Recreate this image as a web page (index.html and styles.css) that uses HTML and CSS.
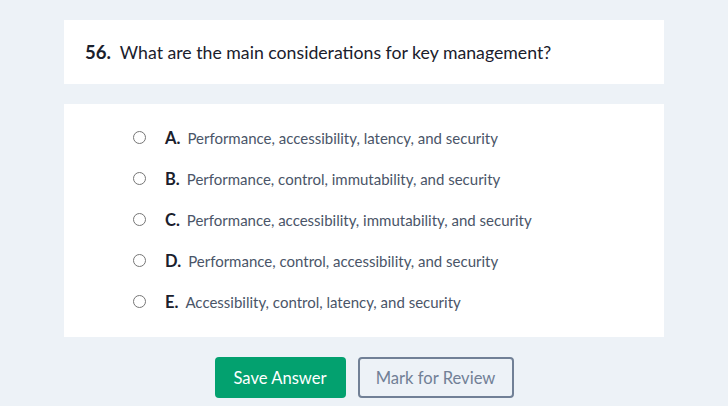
FILE: index.html
```html
<!DOCTYPE html>
<html>
    <head>
        <title>Question 56</title>
        <link rel="stylesheet" href="styles.css">
    </head>
    <body>
        <div class="wrap">
            <div class="question-card">
                <span class="q-num">56.</span>
                <span class="q-text">What are the main considerations for key management?</span>
            </div>
            <div class="options-card">
                <label class="option"><input type="radio" name="answer"><b class="letter">A.</b>Performance, accessibility, latency, and security</label>
                <label class="option"><input type="radio" name="answer"><b class="letter">B.</b>Performance, control, immutability, and security</label>
                <label class="option"><input type="radio" name="answer"><b class="letter">C.</b>Performance, accessibility, immutability, and security</label>
                <label class="option"><input type="radio" name="answer"><b class="letter">D.</b>Performance, control, accessibility, and security</label>
                <label class="option"><input type="radio" name="answer"><b class="letter">E.</b>Accessibility, control, latency, and security</label>
            </div>
            <div class="actions">
                <button class="btn save">Save Answer</button>
                <button class="btn review">Mark for Review</button>
            </div>
        </div>
    </body>
</html>
```
FILE: styles.css
```css
body{
    margin: 0;
    background: #edf2f7;
    font-family: Lato, "Open Sans", sans-serif;
    color: #1a202c;
}

.wrap{
    width: 600px;
    margin: 0 auto;
    padding-top: 20px;
}

.question-card{
    background: #fff;
    height: 64px;
    display: flex;
    align-items: center;
    padding: 0 21px;
    font-size: 17.7px;
    box-sizing: border-box;
}
.q-num{
    font-weight: bold;
    font-size: 18.5px;
    margin-right: 9px;
}
.q-text{
    color: #1a202c;
}

.options-card{
    background: #fff;
    margin-top: 20px;
    padding: 13px 0 15px 66px;
    display: flex;
    flex-direction: column;
}
.option{
    height: 41px;
    display: flex;
    align-items: center;
    font-size: 15px;
    color: #4a5568;
}
.option input{
    margin: 0 19px 0 3px;
    width: 13px;
    height: 13px;
}
.letter{
    color: #1a202c;
    font-size: 16.5px;
    margin-right: 7px;
}

.actions{
    display: flex;
    justify-content: center;
    gap: 12px;
    margin-top: 20px;
}
.btn{
    height: 41px;
    font-family: Lato, sans-serif;
    font-size: 16.6px;
    border-radius: 4px;
    padding: 0;
    box-sizing: border-box;
}
.save{
    background: #03a16f;
    color: #fff;
    border: none;
    width: 131px;
}
.review{
    background: transparent;
    color: #718096;
    border: 2px solid #718096;
    width: 156px;
}
```
